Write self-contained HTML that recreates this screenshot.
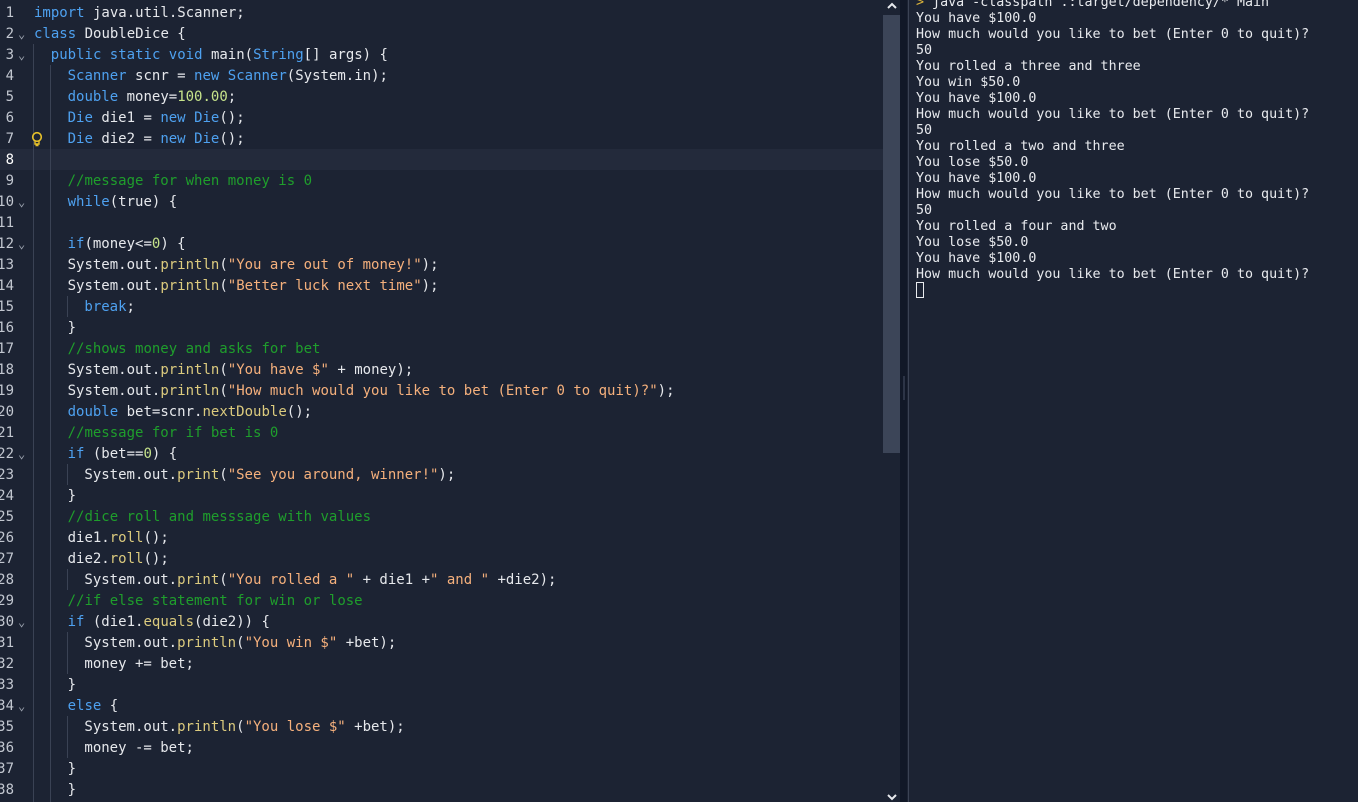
<!DOCTYPE html>
<html><head><meta charset="utf-8"><style>
body{margin:0;width:1358px;height:802px;background:#1c2333;overflow:hidden;position:relative;font-family:"DejaVu Sans Mono","Liberation Mono",monospace}
.ed{position:absolute;left:0;top:0;width:883px;height:802px;background:#1c2333}
.l{position:absolute;left:0;height:21px;line-height:21px;font-size:14px;color:#e6e8ec;white-space:pre}
.ln{position:absolute;left:-16px;width:30px;text-align:right;color:#c2c7d0;font-size:14px}
.k{color:#4ea1f0}.s{color:#f5b07c}.f{color:#dccb7e}.c{color:#1f9e2c}.m{color:#c6e38b}
.g{position:absolute;width:1px;background:#3a4254}
.fold{position:absolute;left:18px;color:#9aa1ad;font-size:12px}
.term{position:absolute;left:908px;top:0;width:450px;height:802px;background:#1c2333;border-left:1px solid #3b4354}
.t{position:absolute;left:7px;font-size:13.33px;line-height:16px;color:#e8eaee;white-space:pre}
</style></head><body>
<div class="ed">
<div style="position:absolute;left:0;top:149px;width:883px;height:21px;background:#232a3b"></div>
<div class="g" style="left:33px;top:44px;height:758px"></div>
<div class="g" style="left:50px;top:65px;height:737px"></div>
<div class="g" style="left:67px;top:296px;height:21px"></div>
<div class="g" style="left:67px;top:464px;height:21px"></div>
<div class="g" style="left:67px;top:569px;height:21px"></div>
<div class="g" style="left:67px;top:632px;height:42px"></div>
<div class="g" style="left:67px;top:716px;height:42px"></div>
<div id="code"></div>
<svg style="position:absolute;left:31px;top:131px" width="12" height="16" viewBox="0 0 12 16"><circle cx="6" cy="6" r="4.3" fill="none" stroke="#e8c22a" stroke-width="1.6"/><path d="M4 10v3h4v-3M4.5 14.5h3" stroke="#e8c22a" stroke-width="1.4" fill="none"/></svg>
</div>
<div style="position:absolute;left:883px;top:0;width:17px;height:802px;background:#1c2333"></div>
<div style="position:absolute;left:883px;top:15px;width:17px;height:438px;background:#3c4558"></div>
<div style="position:absolute;left:900px;top:0;width:7px;height:802px;background:#111827"></div>
<div style="position:absolute;left:903px;top:376px;width:2px;height:24px;background:#2c3446"></div>
<svg style="position:absolute;left:886px;top:2px" width="12" height="8"><path d="M2 6l4-4 4 4" stroke="#e8eaee" stroke-width="2" fill="none"/></svg>
<svg style="position:absolute;left:886px;top:793px" width="12" height="8"><path d="M2 2l4 4 4-4" stroke="#e8eaee" stroke-width="2" fill="none"/></svg>
<div class="term">
<div class="t" style="top:-5px"><span style="color:#d9b23a">&gt;</span> java -classpath .:target/dependency/* Main</div>
<div class="t" style="top:11px">You have $100.0
How much would you like to bet (Enter 0 to quit)?
50
You rolled a three and three
You win $50.0
You have $100.0
How much would you like to bet (Enter 0 to quit)?
50
You rolled a two and three
You lose $50.0
You have $100.0
How much would you like to bet (Enter 0 to quit)?
50
You rolled a four and two
You lose $50.0
You have $100.0
How much would you like to bet (Enter 0 to quit)?</div>
<div style="position:absolute;left:7px;top:282px;width:6px;height:14px;border:1px solid #e8eaee"></div>
</div>
<script>
var L=[
[0,'<span class="k">import</span> java.util.Scanner;'],
[0,'<span class="k">class</span> DoubleDice {',1],
[1,'<span class="k">public static void</span> main(<span class="k">String</span>[] args) {',1],
[2,'<span class="k">Scanner</span> scnr = <span class="k">new</span> <span class="k">Scanner</span>(System.in);'],
[2,'<span class="k">double</span> money=<span class="m">100.00</span>;'],
[2,'<span class="k">Die</span> die1 = <span class="k">new</span> <span class="k">Die</span>();'],
[2,'<span class="k">Die</span> die2 = <span class="k">new</span> <span class="k">Die</span>();'],
[2,''],
[2,'<span class="c">//message for when money is 0</span>'],
[2,'<span class="k">while</span>(true) {',1],
[2,''],
[2,'<span class="k">if</span>(money&lt;=<span class="m">0</span>) {',1],
[2,'System.out.<span class="f">println</span>(<span class="s">"You are out of money!"</span>);'],
[2,'System.out.<span class="f">println</span>(<span class="s">"Better luck next time"</span>);'],
[3,'<span class="k">break</span>;'],
[2,'}'],
[2,'<span class="c">//shows money and asks for bet</span>'],
[2,'System.out.<span class="f">println</span>(<span class="s">"You have $"</span> + money);'],
[2,'System.out.<span class="f">println</span>(<span class="s">"How much would you like to bet (Enter 0 to quit)?"</span>);'],
[2,'<span class="k">double</span> bet=scnr.<span class="f">nextDouble</span>();'],
[2,'<span class="c">//message for if bet is 0</span>'],
[2,'<span class="k">if</span> (bet==<span class="m">0</span>) {',1],
[3,'System.out.<span class="f">print</span>(<span class="s">"See you around, winner!"</span>);'],
[2,'}'],
[2,'<span class="c">//dice roll and messsage with values</span>'],
[2,'die1.<span class="f">roll</span>();'],
[2,'die2.<span class="f">roll</span>();'],
[3,'System.out.<span class="f">print</span>(<span class="s">"You rolled a "</span> + die1 +<span class="s">" and "</span> +die2);'],
[2,'<span class="c">//if else statement for win or lose</span>'],
[2,'<span class="k">if</span> (die1.<span class="f">equals</span>(die2)) {',1],
[3,'System.out.<span class="f">println</span>(<span class="s">"You win $"</span> +bet);'],
[3,'money += bet;'],
[2,'}'],
[2,'<span class="k">else</span> {',1],
[3,'System.out.<span class="f">println</span>(<span class="s">"You lose $"</span> +bet);'],
[3,'money -= bet;'],
[2,'}'],
[2,'}']];
var h='';
for(var i=0;i<L.length;i++){var t=i*21+3;
h+='<div class="l" style="top:'+t+'px;width:100%"><span class="ln" style="'+(i==7?'color:#fff':'')+'">'+(i+1)+'</span>'+(L[i][2]?'<span class="fold" style="top:0px">&#8964;</span>':'')+'<span style="position:absolute;left:'+(34+16.8*L[i][0])+'px">'+L[i][1]+'</span></div>';}
document.getElementById('code').innerHTML=h;
</script>
</body></html>
